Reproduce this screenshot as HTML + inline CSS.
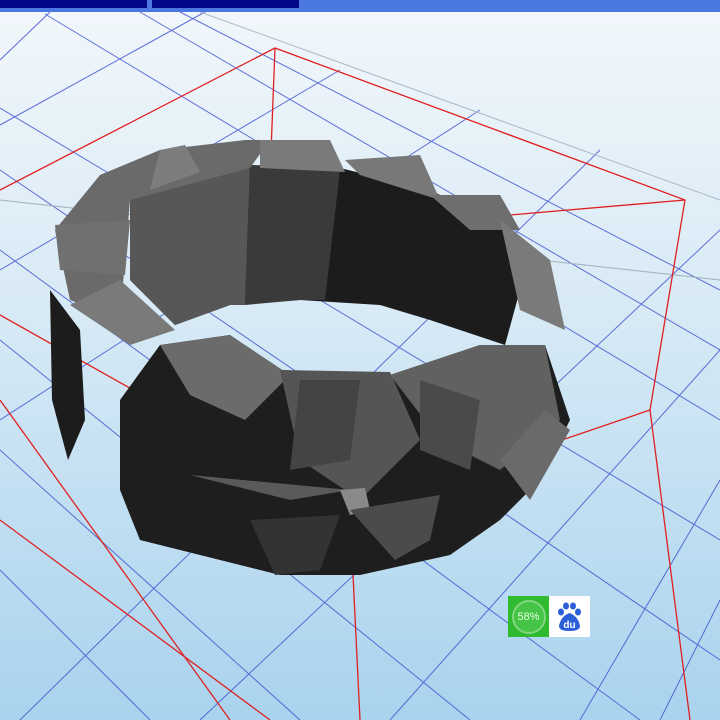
<!DOCTYPE html>
<html><head><style>
html,body{margin:0;padding:0;width:720px;height:720px;overflow:hidden;font-family:"Liberation Sans",sans-serif}
body{background:linear-gradient(#f2f7fb 0%,#d6e9f5 45%,#a9d3ee 100%);position:relative}
.bar{position:absolute;left:0;top:0;width:720px;height:12px;background:#4a78e0}
.b{position:absolute;top:0;height:8px;background:#02078a}
</style></head><body>
<svg width="720" height="720" style="position:absolute;left:0;top:0">
<g stroke="#3a4fd0" stroke-width="1" fill="none" opacity=".8">
<line x1="0" y1="60" x2="50" y2="12"/><line x1="45" y1="14" x2="720" y2="420"/>
<line x1="0" y1="108" x2="720" y2="540"/><line x1="0" y1="170" x2="720" y2="660"/>
<line x1="0" y1="250" x2="640" y2="720"/><line x1="0" y1="340" x2="470" y2="720"/>
<line x1="0" y1="450" x2="300" y2="720"/><line x1="0" y1="570" x2="150" y2="720"/>
<line x1="180" y1="12" x2="720" y2="290"/><line x1="140" y1="12" x2="720" y2="350"/>
<line x1="205" y1="12" x2="0" y2="125"/><line x1="340" y1="70" x2="0" y2="270"/>
<line x1="480" y1="110" x2="0" y2="420"/><line x1="600" y1="150" x2="20" y2="720"/>
<line x1="720" y1="230" x2="200" y2="720"/><line x1="720" y1="350" x2="390" y2="720"/>
<line x1="720" y1="480" x2="580" y2="720"/><line x1="720" y1="600" x2="660" y2="720"/>
<line x1="0" y1="200" x2="720" y2="280" stroke="#8fa0b0"/>
<line x1="200" y1="12" x2="720" y2="200" stroke="#9ab"/>
</g>
<g stroke="#e02020" stroke-width="1.3" fill="none">
<polyline points="0,190 275,48 685,200 650,410 350,512 0,315"/>
<line x1="275" y1="48" x2="268" y2="230"/>
<line x1="510" y1="215" x2="685" y2="200"/>
<line x1="350" y1="512" x2="360" y2="720"/>
<line x1="0" y1="400" x2="230" y2="720"/>
<line x1="650" y1="410" x2="690" y2="720"/>
<line x1="0" y1="520" x2="270" y2="720"/>
</g>
<polygon points="130,200 250,165 340,168 430,190 510,230 520,290 505,345 430,320 380,305 300,300 230,305 175,325 130,280" fill="#1c1c1c"/>
<polygon points="130,200 250,165 245,305 230,305 175,325 130,280" fill="#575757"/>
<polygon points="250,165 340,170 325,300 300,300 245,305" fill="#3a3a3a"/>
<polygon points="55,230 100,175 160,150 245,140 270,140 250,168 130,200 120,320 70,300" fill="#6a6a6a"/>
<polygon points="160,150 185,145 200,172 150,190" fill="#7d7d7d"/>
<polygon points="260,140 330,140 345,172 260,168" fill="#7a7a7a"/>
<polygon points="345,160 420,155 440,200 360,175" fill="#787878"/>
<polygon points="430,195 500,195 520,230 470,230" fill="#6e6e6e"/>
<polygon points="500,220 550,260 565,330 520,310" fill="#7a7a7a"/>
<polygon points="55,225 130,220 125,275 60,270" fill="#707070"/>
<polygon points="70,305 120,280 175,330 130,345" fill="#7a7a7a"/>
<polygon points="50,290 80,330 85,420 68,460 52,400" fill="#1c1c1c"/>
<polygon points="120,400 160,345 230,335 280,370 390,375 480,345 545,345 570,420 540,480 500,520 450,555 360,575 280,575 220,560 140,540 120,490" fill="#1e1e1e"/>
<polygon points="160,345 230,335 290,375 245,420 190,395" fill="#6b6b6b"/>
<polygon points="280,370 390,372 420,440 360,500 300,460" fill="#555"/>
<polygon points="390,375 480,345 545,345 560,420 500,470 440,440" fill="#616161"/>
<polygon points="300,380 360,380 350,460 290,470" fill="#444"/>
<polygon points="420,380 480,400 470,470 420,450" fill="#4a4a4a"/>
<polygon points="190,475 350,490 290,500" fill="#5a5a5a"/>
<polygon points="340,490 365,488 370,510 350,515" fill="#8a8a8a"/>
<polygon points="350,510 440,495 430,540 395,560" fill="#4b4b4b"/>
<polygon points="250,520 340,515 320,570 275,575" fill="#333"/>
<polygon points="500,460 545,410 570,430 530,500" fill="#6a6a6a"/>
</svg>
<div class="bar"></div><div class="b" style="left:0;width:147px"></div><div class="b" style="left:152px;width:147px"></div>
<div style="position:absolute;left:508px;top:596px;width:41px;height:41px;background:#2fba2f;display:flex;align-items:center;justify-content:center">
<div style="width:30px;height:30px;border-radius:50%;border:2px solid #7fd77f;background:#45c445;color:#e8ffe8;font-size:11px;display:flex;align-items:center;justify-content:center">58%</div></div>
<div style="position:absolute;left:549px;top:596px;width:41px;height:41px;background:#fff">
<svg width="41" height="41" style="position:absolute;left:0;top:0"><g fill="#2a5fd8">
<ellipse cx="12" cy="16" rx="3" ry="3.5"/><ellipse cx="17" cy="10" rx="3" ry="3.5"/><ellipse cx="24" cy="10" rx="3" ry="3.5"/><ellipse cx="29" cy="16" rx="3" ry="3.5"/>
<path d="M10,30 Q12,20 20.5,17 Q29,20 31,30 Q31,35 20.5,35 Q10,35 10,30Z"/></g>
<text x="20.5" y="32" text-anchor="middle" fill="#fff" font-size="10" font-weight="bold" font-family="Liberation Sans,sans-serif">du</text></svg>
</div>
</body></html>
